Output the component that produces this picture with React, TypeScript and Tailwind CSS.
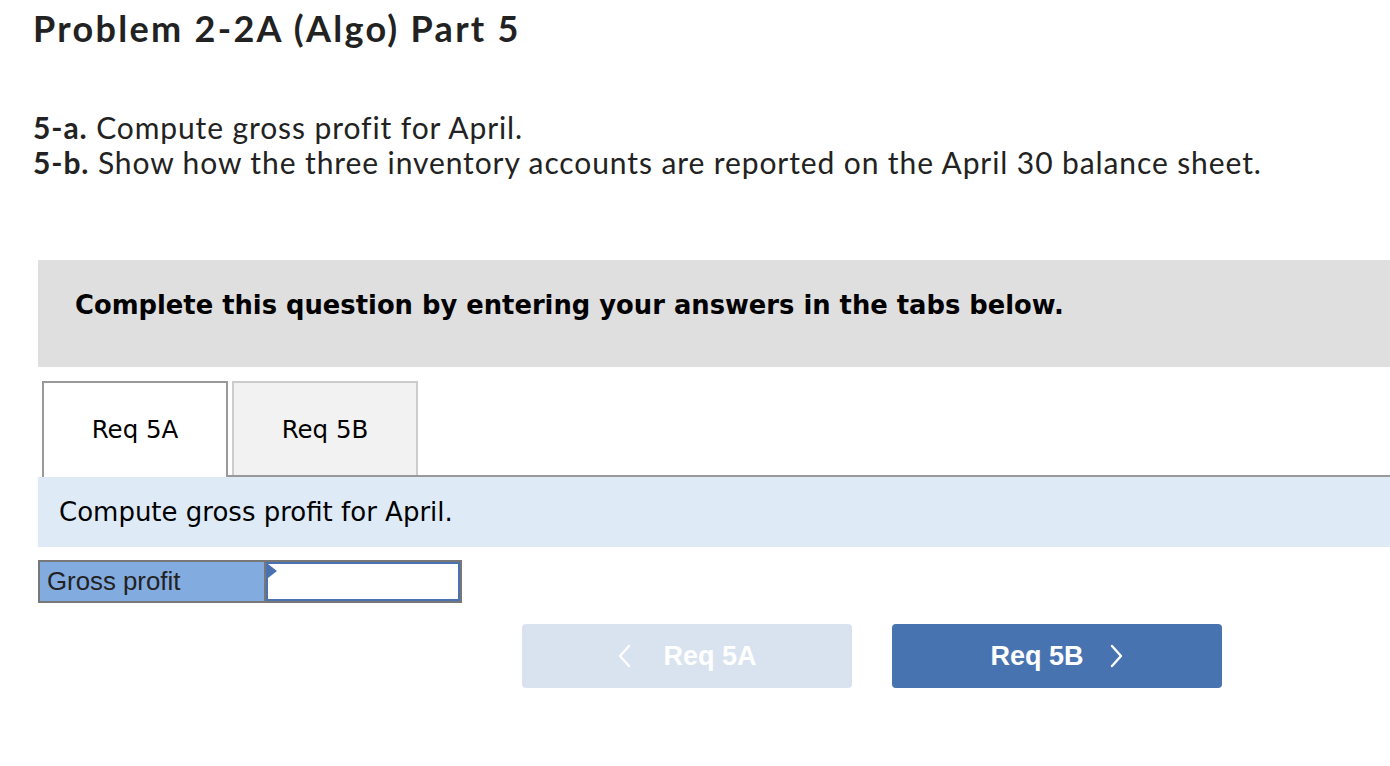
import React from "react"

function ChevronLeft() {
  return (
    <svg width="14" height="24" viewBox="0 0 14 24" fill="none">
      <path d="M12 2 L3 12 L12 22" stroke="white" strokeWidth="2.4" strokeLinecap="round" strokeLinejoin="round" />
    </svg>
  )
}

function ChevronRight() {
  return (
    <svg width="14" height="24" viewBox="0 0 14 24" fill="none">
      <path d="M2 2 L11 12 L2 22" stroke="white" strokeWidth="2.4" strokeLinecap="round" strokeLinejoin="round" />
    </svg>
  )
}

export default function App() {
  const proxima = { fontFamily: "Lato, 'Open Sans', sans-serif" }
  const verdana = { fontFamily: "'DejaVu Sans', Verdana, sans-serif" }
  const arial = { fontFamily: "'Liberation Sans', Arial, sans-serif" }

  return (
    <div className="min-h-screen w-[1390px] bg-white pl-[33px] text-[#222]" style={proxima}>
      {/* Title */}
      <div className="flex h-[55px] items-center">
        <h1 className="text-[36px] font-bold leading-none tracking-[2.3px] text-[#222]">
          Problem 2-2A (Algo) Part 5
        </h1>
      </div>

      {/* Instructions */}
      <div className="mt-[55px] text-[30px] leading-[35px] tracking-[0.9px] text-[#222]">
        <p>
          <span className="font-bold">5-a.</span> Compute gross profit for April.
        </p>
        <p>
          <span className="font-bold">5-b.</span> Show how the three inventory accounts are reported on the April 30 balance sheet.
        </p>
      </div>

      {/* Notice box */}
      <div className="ml-[5px] mt-[80px] h-[107px] bg-[#dfdfdf] pl-[37px] pt-[30px]">
        <p className="text-[25.8px] font-bold leading-[30px] text-black" style={verdana}>
          Complete this question by entering your answers in the tabs below.
        </p>
      </div>

      {/* Tabs */}
      <div className="ml-[9px] mt-[14px] flex items-end" style={verdana}>
        <div className="flex h-[96px] w-[186px] items-center justify-center border-2 border-b-0 border-[#999] bg-white text-[24.5px] text-black">
          Req 5A
        </div>
        <div className="flex flex-1 border-b-2 border-[#999]">
          <div className="ml-[4px] flex h-[94px] w-[186px] items-center justify-center border-2 border-b-0 border-[#ccc] bg-[#f2f2f2] pt-[2px] text-[24.5px] text-black">
            Req 5B
          </div>
        </div>
      </div>

      {/* Tab content */}
      <div className="ml-[5px] flex h-[70px] items-center bg-[#deebf7] pl-[21px]" style={verdana}>
        <p className="text-[26px] text-black">Compute gross profit for April.</p>
      </div>

      {/* Answer row */}
      <div className="ml-[5px] mt-[13px] flex h-[43px] w-[424px] border-2 border-[#777]">
        <div
          className="flex w-[226px] items-center border-r-2 border-[#777] bg-[#82abdf] pl-[7px] text-[25.8px] text-[#222]"
          style={arial}
        >
          Gross profit
        </div>
        <div className="relative flex-1 border-2 border-[#4a72b1] bg-white">
          <div className="absolute left-0 top-0 h-0 w-0 border-y-[7px] border-l-[9px] border-y-transparent border-l-[#4a72b1]" />
        </div>
      </div>

      {/* Navigation buttons */}
      <div className="ml-[489px] mt-[21px] flex gap-[40px]" style={arial}>
        <button className="flex h-[64px] w-[330px] items-center justify-center gap-[32px] rounded-[4px] bg-[#d9e3ef] text-[27px] font-bold text-white">
          <ChevronLeft />
          <span>Req 5A</span>
        </button>
        <button className="flex h-[64px] w-[330px] items-center justify-center gap-[26px] rounded-[4px] bg-[#4773b1] text-[27px] font-bold text-white">
          <span>Req 5B</span>
          <ChevronRight />
        </button>
      </div>
    </div>
  )
}
